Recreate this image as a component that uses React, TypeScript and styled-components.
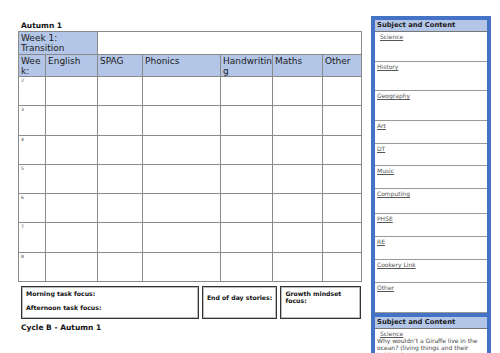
import React from 'react';
import styled, { createGlobalStyle } from 'styled-components';

const GlobalStyle = createGlobalStyle`
  html, body {
    margin: 0;
    padding: 0;
    background: #ffffff;
    font-family: 'DejaVu Sans', Verdana, sans-serif;
    color: #111;
  }
`;

const headerBlue = '#b4c6e7';
const frameBlue = '#4472c4';
const gridGrey = '#8a8a8a';

const columns = [
  { label: 'Wee k:', width: 27 },
  { label: 'English', width: 52 },
  { label: 'SPAG', width: 45 },
  { label: 'Phonics', width: 78 },
  { label: 'Handwritin g', width: 52 },
  { label: 'Maths', width: 50 },
  { label: 'Other', width: 39 },
];

const weeks = ['2', '3', '4', '5', '6', '7', '8'];

const subjects = [
  { name: 'Science', height: 30, indent: true },
  { name: 'History', height: 29 },
  { name: 'Geography', height: 30 },
  { name: 'Art', height: 23 },
  { name: 'DT', height: 22 },
  { name: 'Music', height: 23 },
  { name: 'Computing', height: 25 },
  { name: 'PHSE', height: 23 },
  { name: 'RE', height: 23 },
  { name: 'Cookery Link', height: 23 },
  { name: 'Other', height: 30 },
];

function App() {
  return (
    <Page>
      <GlobalStyle />
      <Planner>
        <Title>Autumn 1</Title>
        <WeekTable>
          <colgroup>
            {columns.map(col => (
              <col key={col.label} style={{ width: col.width }} />
            ))}
          </colgroup>
          <tbody>
            <TopRow>
              <HeadCell colSpan={2} highlighted>
                Week 1:
                <br />
                Transition
              </HeadCell>
              <HeadCell colSpan={5} />
            </TopRow>
            <LabelRow>
              {columns.map(col => (
                <HeadCell key={col.label} highlighted>
                  {col.label.includes(' ') ? (
                    <>
                      {col.label.split(' ')[0]}
                      <br />
                      {col.label.split(' ')[1]}
                    </>
                  ) : (
                    col.label
                  )}
                </HeadCell>
              ))}
            </LabelRow>
            {weeks.map(week => (
              <WeekRow key={week}>
                <NumberCell>{week}</NumberCell>
                {columns.slice(1).map(col => (
                  <BodyCell key={col.label} />
                ))}
              </WeekRow>
            ))}
          </tbody>
        </WeekTable>
        <FocusRow>
          <FocusBox width={179}>
            <FocusLabel>Morning task focus:</FocusLabel>
            <FocusLabel gap={7}>Afternoon task focus:</FocusLabel>
          </FocusBox>
          <FocusBox width={76}>
            <FocusLabel gap={4}>End of day stories:</FocusLabel>
          </FocusBox>
          <FocusBox width={81}>
            <FocusLabel>
              Growth mindset
              <br />
              focus:
            </FocusLabel>
          </FocusBox>
        </FocusRow>
        <Title>Cycle B - Autumn 1</Title>
      </Planner>
      <SidePanel>
        <SubjectHeader>Subject and Content</SubjectHeader>
        {subjects.map(subject => (
          <SubjectRow key={subject.name} height={subject.height}>
            <SubjectName indent={subject.indent}>{subject.name}</SubjectName>
          </SubjectRow>
        ))}
        <Divider />
        <SubjectHeader>Subject and Content</SubjectHeader>
        <SubjectRow height={40}>
          <SubjectName indent>Science</SubjectName>
          <SubjectText>
            Why wouldn’t a Giraffe live in the ocean? (living things and their
            habitats)
          </SubjectText>
        </SubjectRow>
      </SidePanel>
    </Page>
  );
}

const Page = styled.div`
  width: 500px;
  height: 353px;
  overflow: hidden;
  display: flex;
  align-items: flex-start;
  gap: 10px;
  padding-left: 18px;
  box-sizing: border-box;
`;

const Planner = styled.div`
  width: 343px;
  padding-top: 20px;
  display: flex;
  flex-direction: column;
`;

const Title = styled.div`
  font-size: 7.5px;
  font-weight: bold;
  line-height: 11px;
  height: 11px;
  padding-left: 3px;
`;

const WeekTable = styled.table`
  width: 343px;
  table-layout: fixed;
  border-collapse: collapse;
  border: 1.5px solid #777;
`;

const TopRow = styled.tr`
  height: 23px;
`;

const LabelRow = styled.tr`
  height: 20px;
`;

const WeekRow = styled.tr`
  height: 29.3px;
`;

const HeadCell = styled.td<{ highlighted?: boolean }>`
  background: ${p => (p.highlighted ? headerBlue : '#fff')};
  border: 1.5px solid ${gridGrey};
  padding: 1px 2px 0;
  vertical-align: top;
  font-size: 9px;
  line-height: 10px;
  color: #1a1a1a;
  overflow: hidden;
`;

const BodyCell = styled.td`
  border: 1.5px solid ${gridGrey};
  padding: 0;
`;

const NumberCell = styled(BodyCell)`
  vertical-align: top;
  font-size: 4.5px;
  line-height: 7px;
  padding-left: 2px;
  color: #444;
`;

const FocusRow = styled.div`
  display: flex;
  gap: 3px;
  margin: 4px 0 3px 3px;
`;

const FocusBox = styled.div<{ width: number }>`
  width: ${p => p.width}px;
  height: 33px;
  box-sizing: border-box;
  border: 1px solid #333;
  box-shadow: inset 0 0 0 1px #bbb;
  padding: 3px 4px;
`;

const FocusLabel = styled.div<{ gap?: number }>`
  font-size: 6.2px;
  font-weight: bold;
  line-height: 7px;
  white-space: nowrap;
  margin-top: ${p => p.gap ?? 0}px;
`;

const SidePanel = styled.div`
  margin-top: 16px;
  width: 120px;
  height: 360px;
  box-sizing: border-box;
  border: 4.5px solid ${frameBlue};
  border-bottom: none;
  display: flex;
  flex-direction: column;
  overflow: hidden;
  flex-shrink: 0;
`;

const SubjectHeader = styled.div`
  height: 12px;
  flex-shrink: 0;
  background: ${headerBlue};
  border-bottom: 1px solid #777;
  box-sizing: border-box;
  font-size: 6.8px;
  font-weight: bold;
  line-height: 11px;
  padding-left: 2px;
  color: #1a1a1a;
`;

const SubjectRow = styled.div<{ height: number }>`
  height: ${p => p.height}px;
  flex-shrink: 0;
  box-sizing: border-box;
  border-bottom: 1px solid #999;
  padding: 1px 2px 0;
  background: #fff;
`;

const SubjectName = styled.div<{ indent?: boolean }>`
  font-size: 6px;
  line-height: 7px;
  color: #555;
  text-decoration: underline;
  padding-left: ${p => (p.indent ? '3px' : '0')};
`;

const SubjectText = styled.div`
  font-size: 6px;
  line-height: 7px;
  color: #444;
`;

const Divider = styled.div`
  height: 4px;
  flex-shrink: 0;
  background: ${frameBlue};
`;

export default App;
